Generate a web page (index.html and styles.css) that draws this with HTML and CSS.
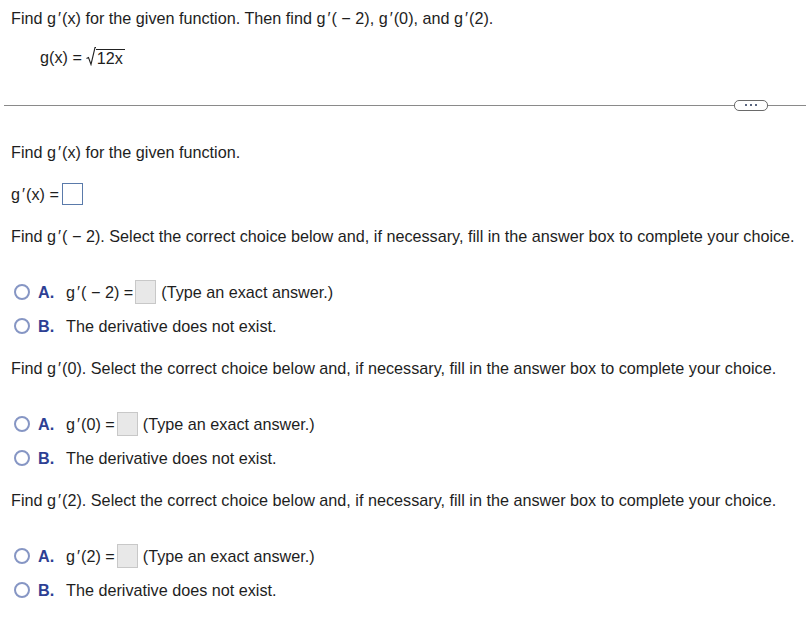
FILE: index.html
```html
<!DOCTYPE html>
<html>
<head>
<meta charset="utf-8">
<link rel="stylesheet" href="styles.css">
</head>
<body>
<div class="top">
  <p class="row intro">Find g<span class="pr">′</span>(x) for the given function. Then find g<span class="pr">′</span>( − 2), g<span class="pr">′</span>(0), and g<span class="pr">′</span>(2).</p>
  <p class="row func">g(x) = <span class="sqrt"><svg class="rad" width="10" height="19" viewBox="0 0 10 19"><path d="M0.5 11.5 L2.5 10.5 L5 17.5 L9 0.5 L10 0.5" fill="none" stroke="#222" stroke-width="1.1"/></svg><span class="under">12x</span></span></p>
</div>
<div class="sep">
  <div class="line"></div>
  <div class="pill"><span></span><span></span><span></span></div>
  <div class="line tail"></div>
</div>
<div class="main">
  <p class="row q1">Find g<span class="pr">′</span>(x) for the given function.</p>
  <p class="row ans">g<span class="pr">′</span>(x) = <span class="box white"></span></p>

  <p class="row q">Find g<span class="pr">′</span>( − 2). Select the correct choice below and, if necessary, fill in the answer box to complete your choice.</p>
  <div class="opt a"><span class="radio"></span><span class="lbl">A.</span><span class="math">g<span class="pr">′</span>( − 2) =</span><span class="box gray"></span><span class="note">(Type an exact answer.)</span></div>
  <div class="opt b"><span class="radio"></span><span class="lbl">B.</span><span class="txt">The derivative does not exist.</span></div>

  <p class="row q">Find g<span class="pr">′</span>(0). Select the correct choice below and, if necessary, fill in the answer box to complete your choice.</p>
  <div class="opt a"><span class="radio"></span><span class="lbl">A.</span><span class="math">g<span class="pr">′</span>(0) =</span><span class="box gray"></span><span class="note">(Type an exact answer.)</span></div>
  <div class="opt b"><span class="radio"></span><span class="lbl">B.</span><span class="txt">The derivative does not exist.</span></div>

  <p class="row q">Find g<span class="pr">′</span>(2). Select the correct choice below and, if necessary, fill in the answer box to complete your choice.</p>
  <div class="opt a"><span class="radio"></span><span class="lbl">A.</span><span class="math">g<span class="pr">′</span>(2) =</span><span class="box gray"></span><span class="note">(Type an exact answer.)</span></div>
  <div class="opt b"><span class="radio"></span><span class="lbl">B.</span><span class="txt">The derivative does not exist.</span></div>
</div>
</body>
</html>
```

FILE: styles.css
```css
html, body {
  margin: 0;
  padding: 0;
  background: #fff;
}
body {
  font-family: "Liberation Sans", Arial, sans-serif;
  font-size: 16.2px;
  color: #1e1e1e;
  width: 806px;
}
p { margin: 0; }
.row {
  line-height: 20px;
  height: 20px;
  white-space: nowrap;
}
.pr {
  margin: 0 1px 0 2px;
}
.top {
  padding: 8px 0 0 11px;
}
.func {
  margin-top: 19px;
  padding-left: 29px;
  display: flex;
  align-items: center;
}
.sqrt {
  display: inline-flex;
  align-items: flex-end;
  margin-left: 4px;
}
.rad {
  display: block;
  margin-bottom: 1px;
}
.under {
  border-top: 1px solid #222;
  line-height: 17px;
  padding: 0 2px 0 1px;
}
.sep {
  margin-top: 32px;
  display: flex;
  align-items: center;
  padding-left: 4px;
  height: 12px;
}
.line {
  flex: 0 0 730px;
  height: 1px;
  background: #8a8a8a;
}
.line.tail { flex: 1 1 auto; }
.pill {
  flex: 0 0 auto;
  width: 32px;
  height: 9px;
  border: 1px solid #6a6a6a;
  border-radius: 5px;
  display: flex;
  justify-content: center;
  align-items: center;
  gap: 3px;
  background: #fff;
}
.pill span {
  width: 2px;
  height: 2px;
  background: #5a6680;
}
.main {
  padding-left: 11px;
}
.q1 { margin-top: 31px; }
.ans {
  margin-top: 22px;
  display: flex;
  align-items: center;
}
.box {
  display: inline-block;
  box-sizing: border-box;
}
.box.white {
  width: 21px;
  height: 22px;
  border: 1px solid #5a7aaa;
  margin-left: 3px;
}
.box.gray {
  width: 21px;
  height: 24px;
  border: 1px solid #c8c8c8;
  background: #e8e8e8;
  margin: 0 5px 0 2px;
}
.q { margin-top: 22px; }
.opt {
  display: flex;
  align-items: center;
  height: 24px;
  white-space: nowrap;
}
.opt.a { margin-top: 34px; }
.opt.b { margin-top: 10px; }
.opt.b + .q { margin-top: 20px; }
.radio {
  width: 16px;
  height: 16px;
  box-sizing: border-box;
  border: 2px solid #8696c4;
  border-radius: 50%;
  margin-left: 3px;
  margin-right: 8px;
}
.lbl {
  color: #2e3f94;
  font-weight: bold;
  width: 28px;
}
```
